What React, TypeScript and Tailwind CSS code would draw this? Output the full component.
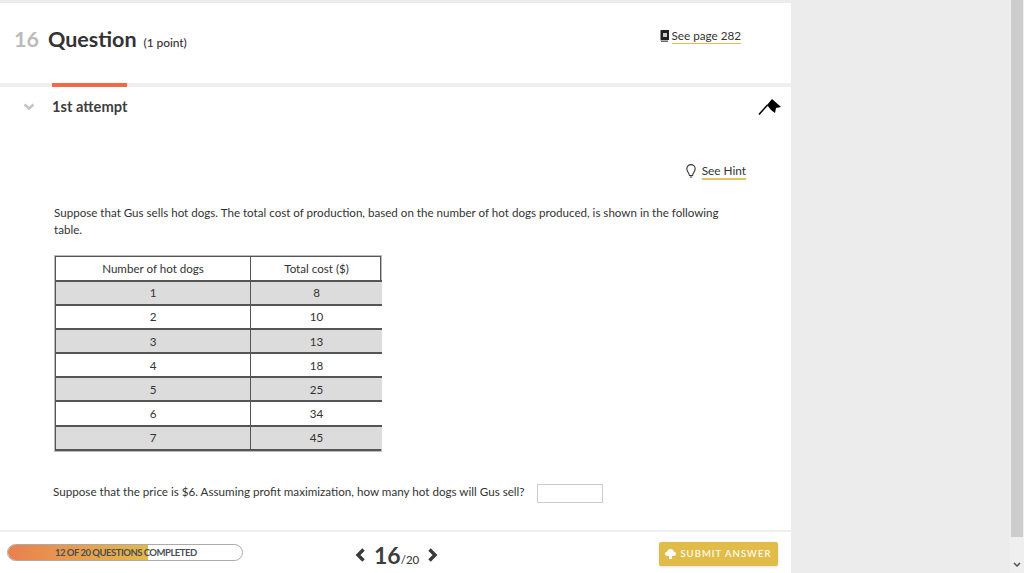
import React from "react";

const rows: [string, string][] = [["1","8"],["2","10"],["3","13"],["4","18"],["5","25"],["6","34"],["7","45"]];

export default function App() {
  return (
    <div className="w-[1024px] h-[573px] overflow-hidden flex bg-[#ececec] font-['Lato','Noto_Sans',sans-serif] text-[#333]">
      <div className="w-[1010px] flex flex-col pt-[3px]">
        <div className="w-[791px] h-[570px] bg-white flex flex-col">
          <div className="h-[80px] flex shrink-0">
            <div className="flex items-baseline pl-[14px] pt-[21px]">
              <span className="text-[21.5px] leading-[30px] font-bold text-[#bbbbbb] w-[34px]">16</span>
              <span className="text-[21.5px] leading-[30px] font-bold text-[#333]">Question</span>
              <span className="text-[12px] ml-[7px] font-medium text-[#333] tracking-[-0.1px]">(1 point)</span>
            </div>
            <div className="ml-auto pr-[50px] pt-[25px] flex items-start">
              <svg width="9" height="12" viewBox="0 0 9 12" className="mt-[2px] mr-[3px]"><path d="M1 0h8v10H1.500C1 10 .5 10.500 .5 11V1C.5.5 .7 0 1 0z" fill="#222"/><rect x="3" y="3" width="4" height="4" fill="#ccc"/><rect x="1" y="10.500" width="7" height="1.500" fill="#666"/></svg>
              <span className="text-[11.7px] leading-[15px] border-b border-[#e2b94c] text-[#333]">See page 282</span>
            </div>
          </div>
          <div className="h-[4px] bg-[#efefef] shrink-0">
            <div className="ml-[52px] w-[75px] h-[4px] bg-[#f2694a]"></div>
          </div>
          <div className="flex-1 flex flex-col min-h-0">
            <div className="flex h-[40px] shrink-0 items-start pt-[9px]">
              <svg width="12" height="8" viewBox="0 0 12 8" className="ml-[23px] mt-[7px]"><path d="M1.500 1.500 6 5.500l4.500-4" fill="none" stroke="#c4c4c4" strokeWidth="2.600"/></svg>
              <span className="ml-[17px] text-[14.7px] leading-[20px] font-bold text-[#3d3d3d]">1st attempt</span>
              <svg width="24" height="19" viewBox="0 0 24 19" className="ml-auto mr-[9px] mt-[1px]"><path d="M1 17.500 9.500 8" stroke="#000" strokeWidth="1.500" fill="none"/><path d="M14 2 23 10 18 11 17 16 13 13 9 8z" fill="#000"/></svg>
            </div>
            <div className="flex justify-end pr-[45px] pt-[36px] items-start h-[49px] shrink-0">
              <svg width="10" height="14" viewBox="0 0 10 14" className="mr-[6px] mt-[1px]"><path d="M3.500 11.500C3 9 .8 7.500 .8 4.800a4.200 4.200 0 0 1 8.400 0C9.200 7.500 7 9 6.500 11.500zM3.800 13h2.400" fill="none" stroke="#333" strokeWidth="1.100"/></svg>
              <span className="text-[11.8px] leading-[15px] border-b-2 border-[#e2c35c] text-[#333]">See Hint</span>
            </div>
            <p className="ml-[54px] mt-[28px] text-[11.6px] leading-[17px] w-[680px] text-[#333]">Suppose that Gus sells hot dogs. The total cost of production, based on the number of hot dogs produced, is shown in the following table.</p>
            <div className="ml-[54px] mt-[17px] w-[328px] border border-[#bbb]">
              <div className="grid grid-cols-[195px_131px] border-x border-b-2 border-t border-[#555]">
                <div className="h-[23px] flex items-center justify-center text-[11.6px] border-r border-[#555]">Number of hot dogs</div>
                <div className="h-[23px] flex items-center justify-center text-[11.6px]">Total cost ($)</div>
                {rows.map(([a, b], i) => (
                  <React.Fragment key={a}>
                    <div className={`h-[24.1px] flex items-center justify-center text-[11.6px] border-t-2 border-r border-[#555] ${i % 2 === 0 ? "bg-[#dcdcdc]" : "bg-white"}`}>{a}</div>
                    <div className={`h-[24.1px] flex items-center justify-center text-[11.6px] border-t-2 border-[#555] ${i % 2 === 0 ? "bg-[#dcdcdc]" : "bg-white"}`}>{b}</div>
                  </React.Fragment>
                ))}
              </div>
            </div>
            <div className="ml-[53px] mt-[32px] flex items-start">
              <span className="text-[11.65px] leading-[16px]">Suppose that the price is $6. Assuming profit maximization, how many hot dogs will Gus sell?</span>
              <div className="ml-[12px] w-[66px] h-[19px] border border-[#ccc] bg-white"></div>
            </div>
          </div>
          <div className="h-[2px] bg-[#efefef] shrink-0 -translate-y-[1px]"></div>
          <div className="h-[40px] shrink-0 flex items-center relative">
            <div className="ml-[7px] w-[236px] h-[17px] rounded-full border border-[#aaa] relative overflow-hidden bg-white -translate-y-[1px]">
              <div className="h-full w-[140px] bg-gradient-to-r from-[#e8804f] to-[#e2b94c]"></div>
              <span className="absolute left-[47px] top-0 leading-[15px] text-[9.5px] font-bold tracking-[-0.5px] text-[#4a4f55] whitespace-nowrap">12 OF 20 QUESTIONS COMPLETED</span>
            </div>
            <div className="absolute left-[355px] top-[8px] flex items-baseline">
              <svg width="11" height="14" viewBox="0 0 11 14" className="mr-[8px] self-center"><path d="M8.500 1.500 3 7l5.500 5.500" fill="none" stroke="#3a3a3a" strokeWidth="3.400"/></svg>
              <span className="text-[23px] leading-[28px] font-bold text-[#3d3d3d]">16</span>
              <span className="text-[11.5px] text-[#3d3d3d] font-medium">/20</span>
              <svg width="11" height="14" viewBox="0 0 11 14" className="ml-[8px] self-center"><path d="M2.500 1.500 8 7l-5.500 5.500" fill="none" stroke="#3a3a3a" strokeWidth="3.400"/></svg>
            </div>
            <div className="ml-auto mr-[13px] w-[119px] h-[24px] bg-[#e2bc48] rounded-[2px] shadow-sm flex items-center justify-center text-white translate-y-[1px]">
              <svg width="11" height="10" viewBox="0 0 11 10" className="mr-[4px]"><path d="M3 7C1 7 0 6 0 4.700 0 3.500 1 2.700 2 2.700 2.500 1 4 0 5.500 0S8.500 1 9 2.700c1 0 2 .8 2 2C11 6 10 7 8 7H7v3H4V7z" fill="#fff"/></svg>
              <span className="text-[9.5px] font-medium tracking-[1.05px]">SUBMIT ANSWER</span>
            </div>
          </div>
        </div>
      </div>
      <div className="w-[14px] h-full bg-[#efefef] flex flex-col">
        <div className="h-[537px] ml-[1px] mr-[1px] bg-[#cdcdcd]"></div>
        <div className="mt-auto h-[17px] flex items-center justify-center">
          <svg width="8" height="6" viewBox="0 0 8 6"><path d="M1 1l3 3 3-3" fill="none" stroke="#505050" strokeWidth="1.500"/></svg>
        </div>
      </div>
    </div>
  );
}
